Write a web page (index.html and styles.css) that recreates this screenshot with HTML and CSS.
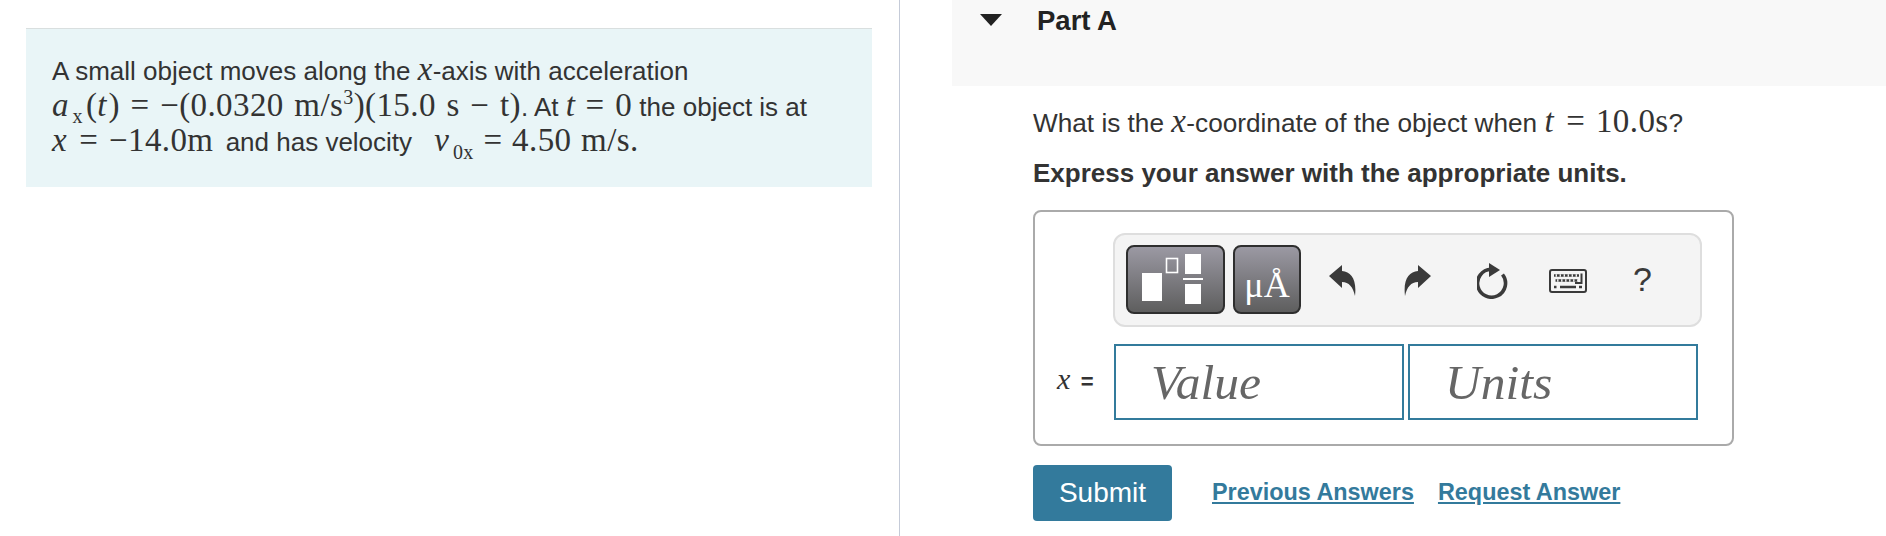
FILE: index.html
```html
<!DOCTYPE html>
<html lang="en">
<head>
<meta charset="utf-8">
<title>Part A</title>
<link rel="stylesheet" href="styles.css">
</head>
<body>
<main class="page">
  <section class="left">
    <div class="intro">
      <p class="intro-line">A small object moves along the <i class="m">x</i>-axis with acceleration</p>
      <p class="intro-line"><span class="m"><i>a</i><sub>x</sub>(<i>t</i>) = −(0.0320 m/s<sup>3</sup>)(15.0 s − t)</span>. At <i class="m">t</i> <span class="m m-eq">= 0</span> the object is at</p>
      <p class="intro-line"><span class="m m-coord"><i>x</i> = −14.0m</span> and has velocity <span class="m m-gap"><i>v</i><sub>0x</sub> = 4.50 m/s.</span></p>
    </div>
  </section>
  <section class="right">
    <header class="part-head">
      <svg class="caret" width="22" height="12" viewBox="0 0 22 12"><path d="M0 0H22L11 12Z" fill="#222"/></svg>
      <h2 class="part-title">Part A</h2>
    </header>
    <div class="part-body">
      <p class="question">What is the <i class="m">x</i>-coordinate of the object when <span class="m"><i>t</i> = 10.0s</span>?</p>
      <p class="instruction">Express your answer with the appropriate units.</p>
      <div class="answer">
        <div class="toolbar">
          <button class="tool tool-wide" type="button" aria-label="Templates">
            <svg width="99" height="68" viewBox="0 0 99 68">
              <rect x="16" y="27" width="20" height="28" fill="#fff"/>
              <rect x="40.5" y="12.5" width="11" height="14" fill="none" stroke="#fff" stroke-width="1.6"/>
              <rect x="59" y="8" width="16" height="20" fill="#fff"/>
              <rect x="57" y="32" width="20" height="2" fill="#fff"/>
              <rect x="59" y="38" width="16" height="20" fill="#fff"/>
            </svg>
          </button>
          <button class="tool tool-unit" type="button">μÅ</button>
          <div class="icons">
            <span class="icon"><svg width="27" height="31" viewBox="0 0 27 31"><path d="M0 11 13 0V6C22 7 28 14 26 31 24 22 20 17 13 17V23Z" fill="#3a3a3a"/></svg></span>
            <span class="icon"><svg width="27" height="31" viewBox="0 0 27 31"><path d="M27 11 14 0V6C5 7-1 14 1 31 3 22 7 17 14 17V23Z" fill="#3a3a3a"/></svg></span>
            <span class="icon"><svg width="32" height="36" viewBox="0 0 32 36"><path d="M25.5 11.5A14 14 0 1 1 14 6.2" fill="none" stroke="#3a3a3a" stroke-width="3.6"/><path d="M12 0 23 7 12 14Z" fill="#3a3a3a"/></svg></span>
            <span class="icon"><svg width="38" height="24" viewBox="0 0 38 24"><rect x="1" y="1" width="36" height="22" rx="2" fill="none" stroke="#3a3a3a" stroke-width="2"/><path d="M5 6.5H30M6.5 11.5H29M5 18H7.5M11 18H27M30 18H33" stroke="#3a3a3a" stroke-width="2.4" fill="none"/><path d="M5 6.5H30M6.5 11.5H29" stroke="#f4f4f4" stroke-width="2.6" stroke-dasharray="1.4 2.6" stroke-dashoffset="-1.6" fill="none"/><path d="M32.5 4.5V14H26" stroke="#3a3a3a" stroke-width="2" fill="none"/></svg></span>
            <span class="icon icon-help">?</span>
          </div>
        </div>
        <div class="entry">
          <label class="entry-label"><i class="m">x</i> =</label>
          <input class="field" type="text" placeholder="Value">
          <input class="field" type="text" placeholder="Units">
        </div>
      </div>
      <div class="actions">
        <button class="submit" type="button">Submit</button>
        <a class="link" href="#">Previous Answers</a>
        <a class="link" href="#">Request Answer</a>
      </div>
    </div>
  </section>
</main>
</body>
</html>
```
FILE: styles.css
```css
* { box-sizing: border-box; }
html, body { margin: 0; height: 100%; background: #fff; }
body {
  font-family: "Liberation Sans", Arial, sans-serif;
  color: #333;
  overflow: hidden;
}
.page { display: flex; height: 536px; }
.left {
  width: 900px;
  border-right: 1px solid #c5cbd8;
  padding: 28px 27px 0 26px;
  flex: none;
}
.intro {
  background: #e9f5f7;
  border-top: 1px solid #d9dfdf;
  height: 159px;
  padding: 25px 26px 0;
}
.intro-line {
  margin: 0;
  font-size: 26px;
  line-height: 35.5px;
  white-space: nowrap;
}
.m {
  font-family: "Liberation Serif", "Times New Roman", serif;
  font-size: 33px;
  letter-spacing: 0.4px;
  word-spacing: 2px;
  line-height: 0;
}
.m i { letter-spacing: 2px; }
.m-eq { margin-left: 3px; }
.m-coord { margin-right: 5px; }
.m-gap { margin-left: 15px; word-spacing: 1px; }
.m-gap sub { margin-right: 0; }
sub, sup { font-size: 20px; line-height: 0; }
sub { margin: 0 3px 0 2px; }
.right { flex: 1; padding-left: 52px; min-width: 0; }
.part-head {
  height: 86px;
  background: #f8f8f8;
  display: flex;
  align-items: flex-start;
  padding-left: 28px;
}
.caret { margin-top: 14px; flex: none; }
.part-title {
  margin: 4px 0 0 35px;
  font-size: 27.5px;
  line-height: 34px;
  font-weight: 700;
  color: #222;
}
.part-body { padding-left: 81px; width: 782px; }
.question {
  margin: 19px 0 0;
  font-size: 26.2px;
  line-height: 36px;
  white-space: nowrap;
}
.instruction {
  margin: 15px 0 0;
  font-size: 26px;
  line-height: 34px;
  font-weight: 700;
}
.answer {
  margin-top: 20px;
  height: 236px;
  border: 2px solid #aaa;
  border-radius: 8px;
  padding: 21px 0 0 78px;
}
.toolbar {
  width: 589px;
  height: 94px;
  background: #f4f4f4;
  border: 2px solid #dedede;
  border-radius: 12px;
  display: flex;
  align-items: flex-start;
  padding: 10px 0 0 11px;
}
.tool {
  height: 69px;
  padding: 0;
  border: 2px solid #2e2e2e;
  border-radius: 8px;
  background: linear-gradient(#9b99a3, #5e5e5e);
  color: #fff;
  display: block;
  flex: none;
}
.tool svg { display: block; margin: -2px; }
.tool-wide { width: 99px; }
.tool-unit {
  width: 68px;
  margin-left: 8px;
  font-family: "Liberation Serif", serif;
  font-size: 36px;
  line-height: 36px;
  padding-top: 10px;
}
.icons { display: flex; margin-left: 4px; }
.icon {
  width: 75px;
  height: 69px;
  display: flex;
  align-items: center;
  justify-content: center;
  padding-top: 2px;
}
.icon-help { font-size: 34px; color: #3a3a3a; padding-top: 0; }
.entry {
  display: flex;
  align-items: center;
  margin-top: 17px;
  margin-left: -77px;
}
.entry-label {
  width: 78px;
  padding-left: 21px;
  font-size: 22px;
  font-weight: 700;
  color: #333;
  white-space: nowrap;
}
.entry-label .m { font-size: 30px; font-weight: 400; margin-right: 4px; }
.field {
  width: 290px;
  height: 76px;
  margin-right: 4px;
  border: 2px solid #337b9c;
  border-radius: 0;
  padding: 0 0 0 35px;
  font-family: "Liberation Serif", serif;
  font-style: italic;
  font-size: 49.5px;
  background: #fff;
  outline: none;
}
.field::placeholder { color: #666; opacity: 1; }
.actions {
  display: flex;
  align-items: center;
  margin-top: 19px;
}
.submit {
  width: 139px;
  height: 56px;
  border: 0;
  border-radius: 4px;
  background: #337a9c;
  color: #fff;
  font-family: "Liberation Sans", sans-serif;
  font-size: 28px;
  padding: 0;
}
.link {
  font-size: 23.4px;
  font-weight: 700;
  color: #337a9c;
  margin-left: 24px;
  margin-bottom: 2px;
  text-decoration: underline;
}
.submit + .link { margin-left: 40px; }
```
